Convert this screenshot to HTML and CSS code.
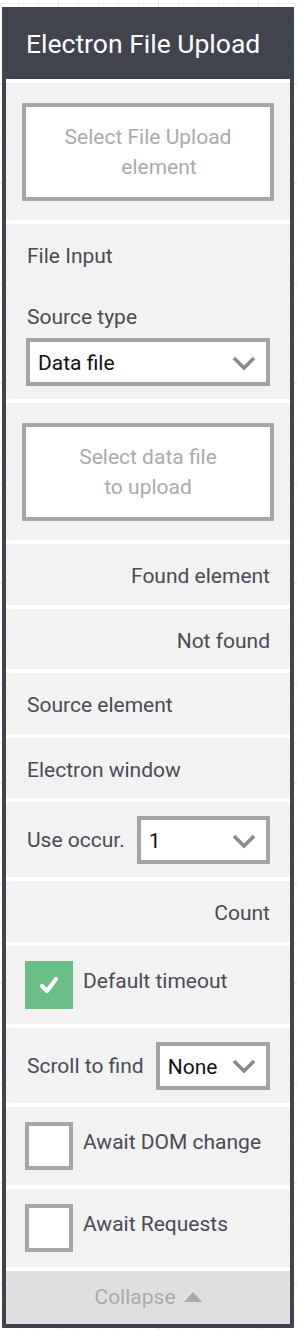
FILE: index.html
```html
<!DOCTYPE html>
<html>
<head>
<meta charset="utf-8">
<link rel="stylesheet" href="styles.css">
</head>
<body>
<div class="panel">
  <div class="header">Electron File Upload</div>
  <div class="body">
    <div class="sec sec-btn">
      <div class="btn">Select File Upload<br><span class="indent">element</span></div>
    </div>
    <div class="sec sec-source">
      <div class="label">File Input</div>
      <div class="label label-gap">Source type</div>
      <div class="select">
        <span class="value">Data file</span>
        <svg class="chev" width="24" height="15" viewBox="0 0 24 15"><path d="M2 2 L12 12 L22 2" fill="none" stroke="#8a8a8a" stroke-width="3.6"/></svg>
      </div>
    </div>
    <div class="sec sec-btn">
      <div class="btn">Select data file<br>to upload</div>
    </div>
    <div class="sec row right">Found element</div>
    <div class="sec row right">Not found</div>
    <div class="sec row">Source element</div>
    <div class="sec row">Electron window</div>
    <div class="sec row-select">
      <span class="label">Use occur.</span>
      <div class="select">
        <span class="value">1</span>
        <svg class="chev" width="24" height="15" viewBox="0 0 24 15"><path d="M2 2 L12 12 L22 2" fill="none" stroke="#8a8a8a" stroke-width="3.6"/></svg>
      </div>
    </div>
    <div class="sec row right">Count</div>
    <div class="sec row-check">
      <span class="check checked">
        <svg width="22" height="20" viewBox="0 0 22 20"><path d="M4 11 L9 16 L18 4" fill="none" stroke="#fff" stroke-width="4.2" stroke-linecap="round" stroke-linejoin="round"/></svg>
      </span>
      <span class="label">Default timeout</span>
    </div>
    <div class="sec row-select">
      <span class="label">Scroll to find</span>
      <div class="select">
        <span class="value">None</span>
        <svg class="chev" width="24" height="15" viewBox="0 0 24 15"><path d="M2 2 L12 12 L22 2" fill="none" stroke="#8a8a8a" stroke-width="3.6"/></svg>
      </div>
    </div>
    <div class="sec row-check">
      <span class="check"></span>
      <span class="label">Await DOM change</span>
    </div>
    <div class="sec row-check">
      <span class="check"></span>
      <span class="label">Await Requests</span>
    </div>
    <div class="collapse">Collapse
      <svg class="tri" width="18" height="10" viewBox="0 0 18 10"><path d="M9 0 L18 10 L0 10 Z" fill="#aaaaaa"/></svg>
    </div>
  </div>
</div>
</body>
</html>
```

FILE: styles.css
```css
html, body {
  margin: 0;
  padding: 0;
}
body {
  width: 297px;
  height: 1330px;
  overflow: hidden;
  font-family: Roboto, "Liberation Sans", sans-serif;
  background-color: #ffffff;
  background-image:
    linear-gradient(to right, #e4e4e4 1px, transparent 1px),
    linear-gradient(to bottom, #e4e4e4 1px, transparent 1px),
    linear-gradient(to right, #f2f2f2 1px, transparent 1px),
    linear-gradient(to bottom, #f2f2f2 1px, transparent 1px);
  background-size: 100px 100px, 100px 100px, 20px 20px, 20px 20px;
  background-position: 58px 0, 0 83px, 18px 0, 0 3px;
  padding-top: 7px;
  padding-left: 2px;
  box-sizing: border-box;
}
.panel {
  width: 292px;
  box-sizing: border-box;
  border: 4px solid #41434e;
  border-top: 0;
  background: #41434e;
}
.header {
  height: 72px;
  line-height: 74px;
  padding-left: 20px;
  color: #ffffff;
  font-size: 26.5px;
  white-space: nowrap;
  box-sizing: border-box;
}
.body {
  background: #ffffff;
  display: flex;
  flex-direction: column;
  gap: 4px;
  padding-top: 4px;
}
.sec {
  background: #f2f2f2;
  color: #494b55;
  font-size: 21px;
  line-height: 30px;
}
.sec-btn {
  padding: 20px 16px 19px;
}
.btn {
  border: 4px solid #a6a6a6;
  background: #ffffff;
  color: #aaaaaa;
  text-align: center;
  padding: 15px 8px;
  font-size: 21px;
  line-height: 30px;
}
.indent {
  padding-left: 22px;
}
.sec-source {
  padding: 17px 20px 13px;
}
.label {
  white-space: nowrap;
}
.sec-source .label {
  padding-left: 1px;
}
.label-gap {
  margin-top: 31px;
  margin-bottom: 6px;
}
.select {
  height: 48px;
  box-sizing: border-box;
  border: 4px solid #a3a3a3;
  background: #ffffff;
  display: flex;
  align-items: center;
  justify-content: space-between;
  padding: 2px 10px 0 8px;
  color: #111111;
  font-size: 21px;
}
.chev {
  flex: none;
  display: block;
}
.row {
  padding: 17.25px 20px 13.25px;
}
.right {
  text-align: right;
}
.sec.row {
  padding-left: 21px;
}
.row-select {
  padding: 14px 20px 13px 21px;
  display: flex;
  align-items: center;
  gap: 12px;
}
.row-select .select {
  flex: 1;
}
.row-check {
  padding: 15px 19px;
  display: flex;
  align-items: center;
  gap: 10px;
}
.row-check .label {
  padding-bottom: 7px;
}
.check {
  width: 48px;
  height: 48px;
  box-sizing: border-box;
  border: 4px solid #a6a6a6;
  background: #ffffff;
  flex: none;
  display: flex;
  align-items: center;
  justify-content: center;
}
.check.checked {
  border: 0;
  background: #6abd85;
}
.check svg {
  display: block;
}
.collapse {
  height: 53px;
  background: #dfdfdf;
  color: #aaaaaa;
  font-size: 21px;
  display: flex;
  align-items: center;
  justify-content: center;
  gap: 8px;
}
.tri {
  display: block;
  margin-top: -1px;
}
```
